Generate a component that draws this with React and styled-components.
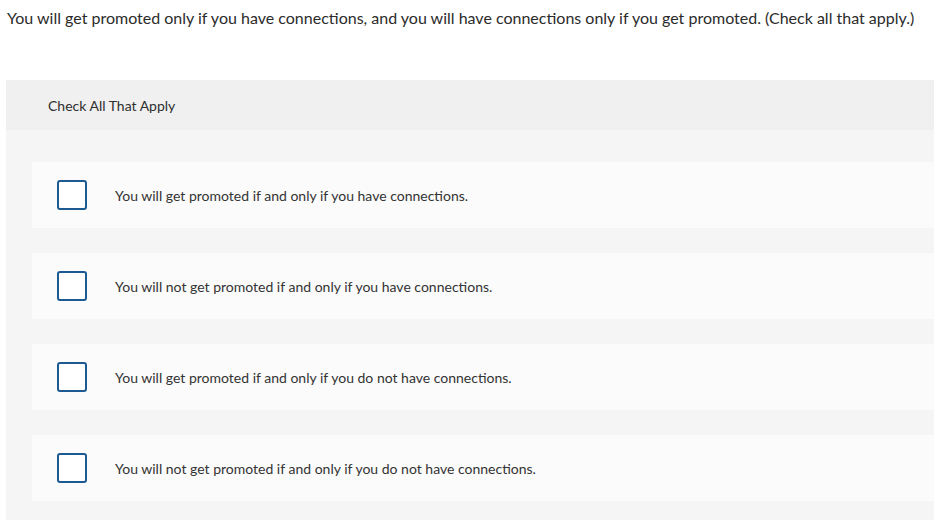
import React from 'react';
import styled, { createGlobalStyle } from 'styled-components';

const GlobalStyle = createGlobalStyle`
  html, body {
    margin: 0;
    padding: 0;
    background: #ffffff;
    overflow: hidden;
  }
  body {
    font-family: Lato, "Open Sans", "Liberation Sans", sans-serif;
    color: #333333;
  }
`;

const Page = styled.div`
  width: 934px;
  height: 520px;
  overflow: hidden;
`;

const Question = styled.p`
  margin: 0;
  padding: 8px 0 0 7px;
  height: 80px;
  box-sizing: border-box;
  font-size: 16px;
  line-height: 19px;
  color: #2b2b2b;
  white-space: nowrap;
`;

const Panel = styled.section`
  margin-left: 6px;
  width: 960px;
  background: #f5f5f5;
`;

const Header = styled.div`
  height: 50px;
  display: flex;
  align-items: center;
  padding-left: 42px;
  background: #f0f0f0;
  font-size: 14px;
  color: #2e2e2e;
`;

const Options = styled.div`
  display: flex;
  flex-direction: column;
  gap: 25px;
  padding: 32px 26px 20px 26px;
`;

const Option = styled.label`
  height: 66px;
  display: flex;
  align-items: center;
  background: #fbfbfb;
  padding-left: 25px;
  cursor: pointer;
`;

const Box = styled.span`
  width: 30px;
  height: 30px;
  box-sizing: border-box;
  border: 2px solid #1d5a91;
  border-radius: 3px;
  background: #ffffff;
  flex-shrink: 0;
`;

const OptionText = styled.span`
  margin-left: 28px;
  font-size: 14px;
  color: #333333;
`;

const options = [
  'You will get promoted if and only if you have connections.',
  'You will not get promoted if and only if you have connections.',
  'You will get promoted if and only if you do not have connections.',
  'You will not get promoted if and only if you do not have connections.',
];

export default function App() {
  return (
    <Page>
      <GlobalStyle />
      <Question>
        You will get promoted only if you have connections, and you will have connections only if you get promoted. (Check all that apply.)
      </Question>
      <Panel>
        <Header>Check All That Apply</Header>
        <Options>
          {options.map((text) => (
            <Option key={text}>
              <Box />
              <OptionText>{text}</OptionText>
            </Option>
          ))}
        </Options>
      </Panel>
    </Page>
  );
}
